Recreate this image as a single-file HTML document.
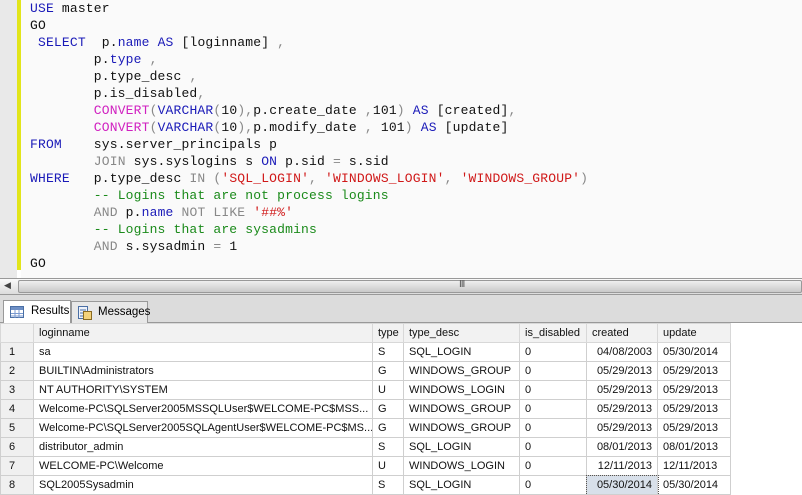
<!DOCTYPE html>
<html><head><style>
*{margin:0;padding:0;box-sizing:border-box}
body{width:802px;height:484px;overflow:hidden;background:#fff;position:relative;font-family:"Liberation Sans",Arial,sans-serif}
#gut{position:absolute;left:0;top:0;width:17px;height:278px;background:#e9e9e9}
#ybar{position:absolute;left:17px;top:0;width:4px;height:270px;background:#e2e51a}
#code{position:absolute;left:21px;top:0;width:781px;height:278px;background:#fafafa}
pre{position:absolute;left:30px;top:0;font-family:"Liberation Mono","Courier New",monospace;font-size:13px;letter-spacing:0.17px;line-height:17px;color:#111}
.k{color:#1a1ab8}.f{color:#d020c0}.s{color:#d01818}.c{color:#1a8a1a}.g{color:#888}
#hs{position:absolute;left:0;top:278px;width:802px;height:17px;background:linear-gradient(#fafafa,#dcdcdc);border-top:1px solid #999;border-bottom:1px solid #999}
#thumb{position:absolute;left:18px;top:1px;width:784px;height:13px;background:linear-gradient(#efefef,#c9c9c9);border:1px solid #999;border-radius:2px}
#tabs{position:absolute;left:0;top:295px;width:802px;height:28px;background:#dcdcdc;border-bottom:1px solid #999}
.tab{position:absolute;top:6px;height:22px;border:1px solid #999;border-bottom:none;font-size:11.5px;line-height:20px;padding-left:27px;color:#000}
table{position:absolute;left:0;top:323px;width:730px;border-collapse:collapse;font-size:11px;table-layout:fixed}
td{height:19px;border:1px solid #cfcfcf;padding:0 5px;white-space:nowrap;overflow:hidden;color:#111}
tr.h td{background:#f2f2f2;border-color:#d8d8d8}
td.n{background:#f0f0f0;padding-left:8px}
td.r{text-align:right}
</style></head><body>
<div id="gut"></div><div id="code"></div><div id="ybar"></div>
<pre><span class="k">USE</span> master
GO
 <span class="k">SELECT</span>  p.<span class="k">name</span> <span class="k">AS</span> [loginname] <span class="g">,</span>
        p.<span class="k">type</span> <span class="g">,</span>
        p.type_desc <span class="g">,</span>
        p.is_disabled<span class="g">,</span>
        <span class="f">CONVERT</span><span class="g">(</span><span class="k">VARCHAR</span><span class="g">(</span>10<span class="g">),</span>p.create_date <span class="g">,</span>101<span class="g">)</span> <span class="k">AS</span> [created]<span class="g">,</span>
        <span class="f">CONVERT</span><span class="g">(</span><span class="k">VARCHAR</span><span class="g">(</span>10<span class="g">),</span>p.modify_date <span class="g">,</span> 101<span class="g">)</span> <span class="k">AS</span> [update]
<span class="k">FROM</span>    sys.server_principals p
        <span class="g">JOIN</span> sys.syslogins s <span class="k">ON</span> p.sid <span class="g">=</span> s.sid
<span class="k">WHERE</span>   p.type_desc <span class="g">IN</span> <span class="g">(</span><span class="s">'SQL_LOGIN'</span><span class="g">,</span> <span class="s">'WINDOWS_LOGIN'</span><span class="g">,</span> <span class="s">'WINDOWS_GROUP'</span><span class="g">)</span>
        <span class="c">-- Logins that are not process logins</span>
        <span class="g">AND</span> p.<span class="k">name</span> <span class="g">NOT LIKE</span> <span class="s">'##%'</span>
        <span class="c">-- Logins that are sysadmins</span>
        <span class="g">AND</span> s.sysadmin <span class="g">=</span> 1
GO</pre>
<div id="hs"><span style="position:absolute;left:4px;top:1px;font-size:9px;color:#444">◀</span><div id="thumb"><span style="position:absolute;left:440px;top:-2px;font-size:10px;color:#555;letter-spacing:-1px">III</span></div></div>
<div id="tabs">
<div class="tab" style="left:3px;width:68px;background:#fff;top:5px;height:24px">
<svg style="position:absolute;left:6px;top:5px" width="14" height="12"><rect x=".5" y=".5" width="13" height="11" fill="#fff" stroke="#4a6fa5"/><rect x="1" y="1" width="12" height="3" fill="#6d8fc5"/><path d="M1 7.5h12M1 10h12M5 4v8M9 4v8" stroke="#7a9ad0"/></svg>Results</div>
<div class="tab" style="left:71px;width:77px;background:#e8e8e8;padding-left:26px">
<svg style="position:absolute;left:5px;top:3px" width="16" height="16"><rect x="1.5" y="1.5" width="9" height="12" fill="#eef2fa" stroke="#4a6fa5"/><rect x="6.5" y="6.5" width="8" height="8" fill="#f4d27a" stroke="#8a6a20"/><path d="M3 5h6M3 8h3M3 11h3" stroke="#4a6fa5"/></svg>Messages</div>
</div>
<table>
<colgroup><col style="width:33px"><col style="width:339px"><col style="width:31px"><col style="width:116px"><col style="width:67px"><col style="width:71px"><col style="width:73px"></colgroup>
<tr class="h"><td class="n"></td><td>loginname</td><td>type</td><td>type_desc</td><td>is_disabled</td><td>created</td><td>update</td></tr>
<tr><td class="n">1</td><td>sa</td><td>S</td><td>SQL_LOGIN</td><td>0</td><td class="r">04/08/2003</td><td>05/30/2014</td></tr>
<tr><td class="n">2</td><td>BUILTIN\Administrators</td><td>G</td><td>WINDOWS_GROUP</td><td>0</td><td class="r">05/29/2013</td><td>05/29/2013</td></tr>
<tr><td class="n">3</td><td>NT AUTHORITY\SYSTEM</td><td>U</td><td>WINDOWS_LOGIN</td><td>0</td><td class="r">05/29/2013</td><td>05/29/2013</td></tr>
<tr><td class="n">4</td><td>Welcome-PC\SQLServer2005MSSQLUser$WELCOME-PC$MSS...</td><td>G</td><td>WINDOWS_GROUP</td><td>0</td><td class="r">05/29/2013</td><td>05/29/2013</td></tr>
<tr><td class="n">5</td><td>Welcome-PC\SQLServer2005SQLAgentUser$WELCOME-PC$MS...</td><td>G</td><td>WINDOWS_GROUP</td><td>0</td><td class="r">05/29/2013</td><td>05/29/2013</td></tr>
<tr><td class="n">6</td><td>distributor_admin</td><td>S</td><td>SQL_LOGIN</td><td>0</td><td class="r">08/01/2013</td><td>08/01/2013</td></tr>
<tr><td class="n">7</td><td>WELCOME-PC\Welcome</td><td>U</td><td>WINDOWS_LOGIN</td><td>0</td><td class="r">12/11/2013</td><td>12/11/2013</td></tr>
<tr><td class="n">8</td><td>SQL2005Sysadmin</td><td>S</td><td>SQL_LOGIN</td><td>0</td><td class="r" style="background:#d8e0ea;outline:1px dotted #555">05/30/2014</td><td>05/30/2014</td></tr>
</table>
</body></html>
